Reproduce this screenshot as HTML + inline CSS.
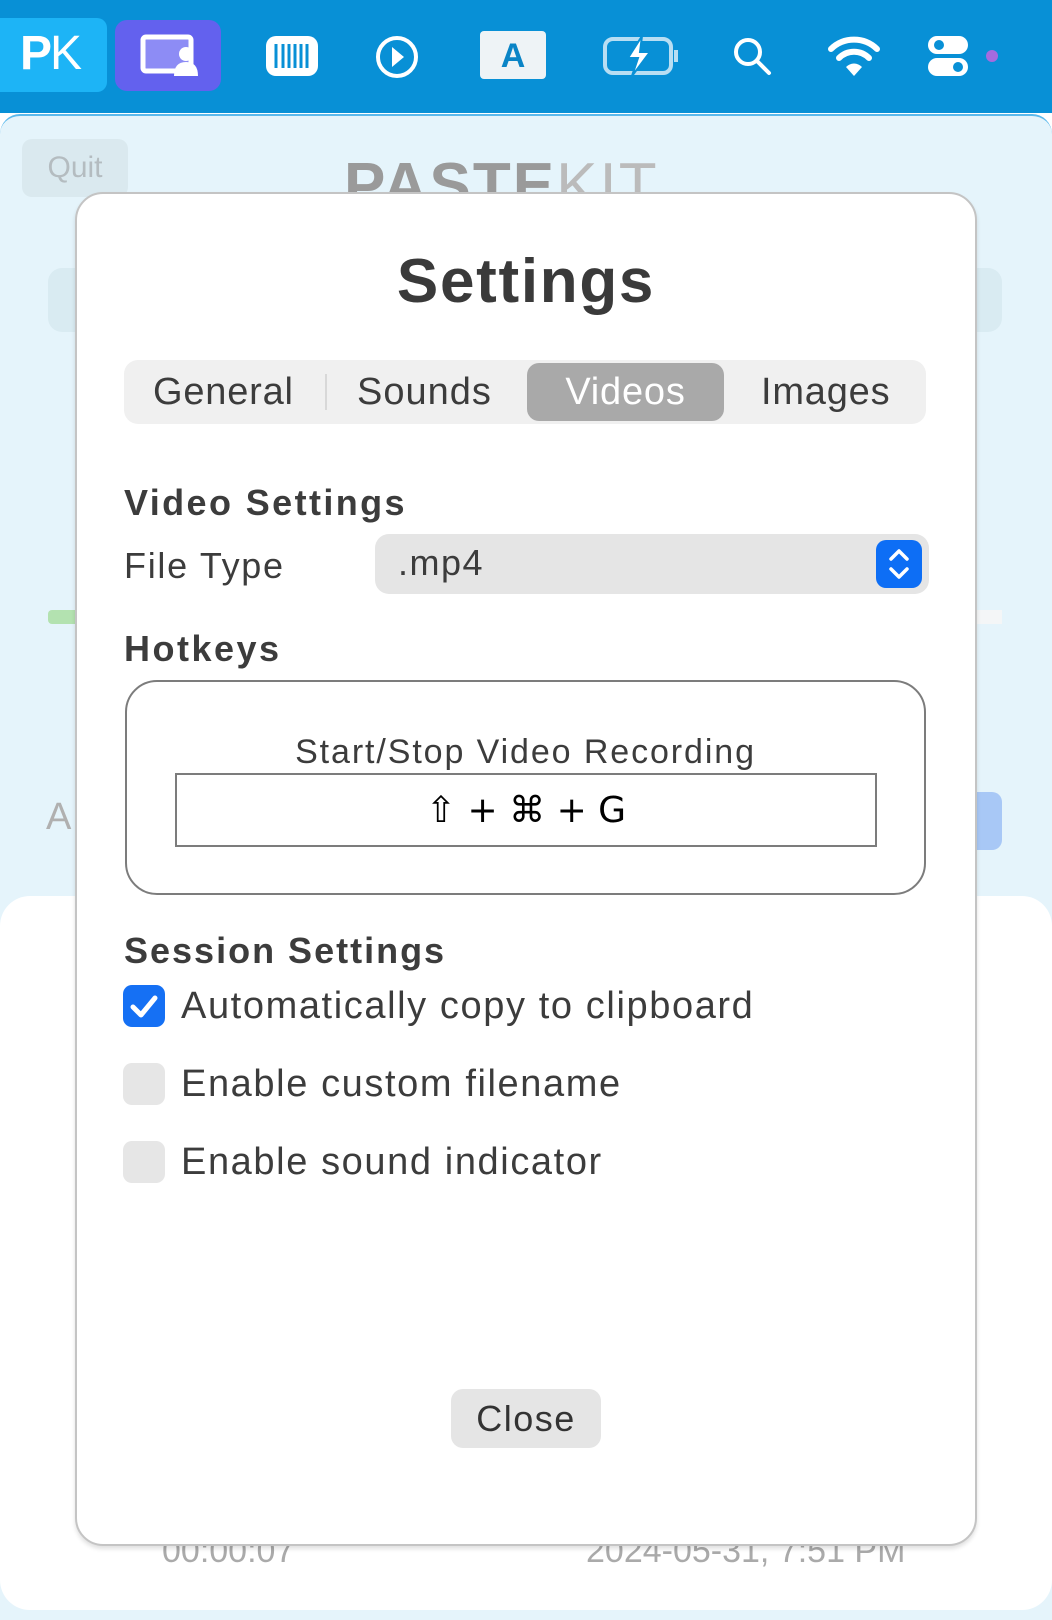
<!DOCTYPE html>
<html><head><style>
*{margin:0;padding:0;box-sizing:border-box}
body{width:1052px;height:1620px;background:#fff;font-family:"Liberation Sans",sans-serif;position:relative;overflow:hidden;color:#3c3c3c}
.abs{position:absolute}
.top{left:0;top:0;width:1052px;height:113px;background:#0890d6}
.panel{left:0;top:114px;width:1052px;height:1506px;background:#e5f4fb;border-radius:20px 20px 0 0;border-top:2px solid #5bb9ec}
.lower{left:0;top:896px;width:1052px;height:714px;background:#fff;border-radius:30px;}
.dlg{left:75px;top:192px;width:902px;height:1354px;background:#fff;border:2px solid #c4c4c4;border-radius:28px;box-shadow:0 3px 4px rgba(0,0,0,.12)}
.t{white-space:nowrap}
.b{letter-spacing:1.6px}
</style></head><body>
<div class="abs top"></div>
<div class="abs" style="left:0;top:18px;width:107px;height:74px;background:#1db4f6;border-radius:0 10px 10px 0"></div>
<div class="abs t" style="left:20px;top:26px;font-size:48px;color:#fff;font-weight:bold;letter-spacing:-2px">P<span style="font-weight:normal">K</span></div>
<div class="abs" style="left:115px;top:20px;width:106px;height:71px;background:#6361ee;border-radius:12px"></div>
<svg class="abs" style="left:140px;top:34px" width="60" height="42" viewBox="0 0 60 42"><rect x="3" y="3" width="48" height="34" rx="3" fill="#8d8cf5" stroke="#fff" stroke-width="5"/><circle cx="46" cy="20" r="7" fill="#fff"/><path d="M34 42 q0-14 12-14 q12 0 12 14z" fill="#fff"/></svg>
<svg class="abs" style="left:264px;top:34px" width="56" height="44"><rect x="2" y="2" width="52" height="40" rx="10" fill="#fff"/><g stroke="#0890d6" stroke-width="3"><path d="M12 10v24M19 10v24M25 10v24M31 10v24M37 10v24M43 10v24"/></g></svg>
<svg class="abs" style="left:372px;top:32px" width="50" height="50"><circle cx="25" cy="25" r="19" fill="none" stroke="#fff" stroke-width="4"/><path d="M20 15l12 10-12 10z" fill="#fff"/></svg>
<div class="abs" style="left:480px;top:31px;width:66px;height:48px;background:#eef3f6;border-radius:4px;color:#0a84c6;font-size:34px;font-weight:bold;text-align:center;line-height:50px">A</div>
<svg class="abs" style="left:602px;top:34px" width="80" height="44"><rect x="3" y="5" width="66" height="34" rx="8" fill="none" stroke="#b8def3" stroke-width="4"/><rect x="72" y="16" width="4" height="12" fill="#b8def3"/><path d="M40 2 L26 24 H36 L30 42 L48 18 H38z" fill="#fff" stroke="#0890d6" stroke-width="2"/></svg>
<svg class="abs" style="left:730px;top:34px" width="44" height="44"><circle cx="18" cy="18" r="12" fill="none" stroke="#fff" stroke-width="4"/><path d="M27 27l12 12" stroke="#fff" stroke-width="4" stroke-linecap="round"/></svg>
<svg class="abs" style="left:826px;top:32px" width="56" height="46"><path d="M5 17a33 33 0 0 1 46 0M13 26a21 21 0 0 1 30 0" fill="none" stroke="#fff" stroke-width="6" stroke-linecap="round"/><path d="M20 35a11 11 0 0 1 16 0L28 44z" fill="#fff"/></svg>
<svg class="abs" style="left:926px;top:34px" width="44" height="44"><rect x="2" y="2" width="40" height="18" rx="9" fill="#fff"/><circle cx="13" cy="11" r="5" fill="#0890d6"/><rect x="2" y="24" width="40" height="18" rx="9" fill="#fff"/><circle cx="32" cy="33" r="5" fill="#0890d6"/></svg>
<div class="abs" style="left:986px;top:50px;width:12px;height:12px;border-radius:50%;background:#a56bdf"></div>

<div class="abs panel"></div>
<div class="abs" style="left:22px;top:139px;width:106px;height:58px;background:#dae9ef;border-radius:10px;color:#b4bcc0;font-size:30px;text-align:center;line-height:58px">Quit</div>
<div class="abs t" style="left:344px;top:150px;font-size:62px;font-weight:bold;color:#9a9a9a;letter-spacing:2px">PASTE<span style="font-weight:normal;color:#bbb">KIT</span></div>
<div class="abs" style="left:48px;top:268px;width:954px;height:64px;background:#d9ebf2;border-radius:14px"></div>
<div class="abs" style="left:48px;top:610px;width:40px;height:14px;background:#b3e2b0;border-radius:4px"></div>
<div class="abs" style="left:960px;top:610px;width:42px;height:14px;background:#f4f6f7"></div>
<div class="abs t" style="left:46px;top:796px;font-size:38px;color:#b0b0b0">A</div>
<div class="abs" style="left:960px;top:792px;width:42px;height:58px;background:#a8c8f6;border-radius:10px"></div>
<div class="abs lower"></div>
<div class="abs t" style="left:162px;top:1532px;font-size:34px;color:#aaa">00:00:07</div>
<div class="abs t" style="left:586px;top:1532px;font-size:34px;color:#aaa">2024-05-31, 7:51 PM</div>

<div class="abs dlg"></div>
<div class="abs t" style="left:0;width:1052px;text-align:center;top:246px;font-size:62px;font-weight:bold;color:#3a3a3a;letter-spacing:1.7px">Settings</div>
<div class="abs" style="left:124px;top:360px;width:802px;height:64px;background:#f0f0f0;border-radius:14px"></div>
<div class="abs" style="left:325px;top:374px;width:2px;height:36px;background:#d8d8d8"></div>
<div class="abs" style="left:527px;top:363px;width:197px;height:58px;background:#a9a9a9;border-radius:12px"></div>
<div class="abs t" style="left:153px;top:371px;font-size:38px;color:#3c3c3c;letter-spacing:0.8px">General</div>
<div class="abs t" style="left:357px;top:371px;font-size:38px;color:#3c3c3c;letter-spacing:1px">Sounds</div>
<div class="abs t" style="left:527px;width:197px;text-align:center;top:371px;font-size:38px;color:#fff;letter-spacing:0.8px">Videos</div>
<div class="abs t" style="left:761px;top:371px;font-size:38px;color:#3c3c3c;letter-spacing:0.8px">Images</div>

<div class="abs t" style="left:124px;top:482px;font-size:36px;font-weight:bold;letter-spacing:2.4px">Video Settings</div>
<div class="abs t" style="left:124px;top:545px;font-size:36px;letter-spacing:1.7px">File Type</div>
<div class="abs" style="left:375px;top:534px;width:554px;height:60px;background:#e5e5e5;border-radius:14px"></div>
<div class="abs t" style="left:398px;top:542px;font-size:36px;letter-spacing:1.5px">.mp4</div>
<svg class="abs" style="left:875px;top:539px" width="48" height="50"><rect x="1" y="1" width="46" height="48" rx="10" fill="#0d6ef5"/><path d="M16 20l8-8 8 8M16 30l8 8 8-8" fill="none" stroke="#fff" stroke-width="3.5" stroke-linecap="round" stroke-linejoin="round"/></svg>

<div class="abs t" style="left:124px;top:628px;font-size:36px;font-weight:bold;letter-spacing:2.5px">Hotkeys</div>
<div class="abs" style="left:125px;top:680px;width:801px;height:215px;border:2px solid #7c7c7c;border-radius:32px"></div>
<div class="abs t" style="left:125px;width:801px;text-align:center;top:733px;font-size:34px;letter-spacing:1.9px">Start/Stop Video Recording</div>
<div class="abs" style="left:175px;top:773px;width:702px;height:74px;border:2px solid #7c7c7c"></div>
<div class="abs t" style="left:175px;width:702px;text-align:center;top:790px;font-size:36px;color:#000;font-family:'DejaVu Sans',sans-serif">⇧ + ⌘ + G</div>

<div class="abs t" style="left:124px;top:930px;font-size:36px;font-weight:bold;letter-spacing:2px">Session Settings</div>
<div class="abs" style="left:123px;top:985px;width:42px;height:42px;background:#1570f4;border-radius:9px"></div>
<svg class="abs" style="left:123px;top:985px" width="42" height="42"><path d="M10 22l8 8 14-17" fill="none" stroke="#fff" stroke-width="5" stroke-linecap="round" stroke-linejoin="round"/></svg>
<div class="abs t b" style="left:181px;top:985px;font-size:38px">Automatically copy to clipboard</div>
<div class="abs" style="left:123px;top:1063px;width:42px;height:42px;background:#e6e6e6;border-radius:9px"></div>
<div class="abs t b" style="left:181px;top:1063px;font-size:38px">Enable custom filename</div>
<div class="abs" style="left:123px;top:1141px;width:42px;height:42px;background:#e6e6e6;border-radius:9px"></div>
<div class="abs t b" style="left:181px;top:1141px;font-size:38px">Enable sound indicator</div>

<div class="abs" style="left:451px;top:1389px;width:150px;height:59px;background:#e5e5e5;border-radius:12px;text-align:center;line-height:59px;font-size:36px;color:#333;letter-spacing:1.5px">Close</div>
</body></html>
